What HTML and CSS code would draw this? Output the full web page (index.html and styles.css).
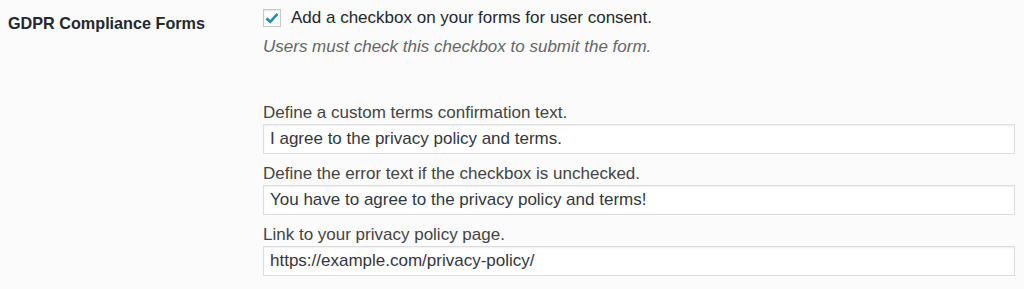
FILE: index.html
```html
<!DOCTYPE html>
<html lang="en">
<head>
    <meta charset="UTF-8">
    <title>GDPR Compliance Forms</title>
    <link rel="stylesheet" href="styles.css">
</head>
<body>
    <div class="form-row">
        <div class="row-title">GDPR Compliance Forms</div>
        <div class="row-fields">
            <label class="consent">
                <span class="checkbox">
                    <svg width="14" height="12" viewBox="0 0 14 12">
                        <path d="M1.5 6.2 L5.2 9.8 L12.5 1.8" fill="none" stroke="#1e8cbe" stroke-width="2.6"/>
                    </svg>
                </span>
                Add a checkbox on your forms for user consent.
            </label>
            <p class="description">Users must check this checkbox to submit the form.</p>

            <div class="field">
                <label for="termsText">Define a custom terms confirmation text.</label>
                <input type="text" id="termsText" value="I agree to the privacy policy and terms.">
            </div>
            <div class="field">
                <label for="errorText">Define the error text if the checkbox is unchecked.</label>
                <input type="text" id="errorText" value="You have to agree to the privacy policy and terms!">
            </div>
            <div class="field">
                <label for="policyLink">Link to your privacy policy page.</label>
                <input type="text" id="policyLink" value="https://example.com/privacy-policy/">
            </div>
        </div>
    </div>
</body>
</html>
```

FILE: styles.css
```css
body {
    margin: 0;
    background-color: #fbfbfb;
    font-family: "Liberation Sans", Arial, sans-serif;
    font-size: 17px;
    color: #23282d;
}

.form-row {
    display: flex;
    padding: 7px 9px 0 8px;
}

.row-title {
    width: 255px;
    flex-shrink: 0;
    padding-top: 6px;
    font-weight: bold;
    font-size: 16.2px;
    line-height: 20px;
}

.row-fields {
    flex: 1;
}

.consent {
    display: flex;
    align-items: center;
    gap: 10px;
    height: 22px;
}

.checkbox {
    width: 16px;
    height: 16px;
    border: 1px solid #c5c9cc;
    background-color: #fff;
    box-shadow: inset 0 1px 2px rgba(0, 0, 0, 0.1);
    display: flex;
    align-items: center;
    justify-content: center;
}

.description {
    margin: 8px 0 0;
    line-height: 20px;
    font-style: italic;
    color: #666;
}

.field {
    margin-top: 10px;
}

.field:first-of-type {
    margin-top: 46px;
}

.field label {
    display: block;
    color: #444;
    line-height: 20px;
    margin-bottom: 1px;
}

input[type="text"] {
    display: block;
    box-sizing: border-box;
    width: 100%;
    height: 30px;
    padding: 0 6px;
    border: 1px solid #ddd;
    background-color: #fff;
    box-shadow: inset 0 1px 2px rgba(0, 0, 0, 0.07);
    font-family: inherit;
    font-size: 17px;
    color: #32373c;
}
```
